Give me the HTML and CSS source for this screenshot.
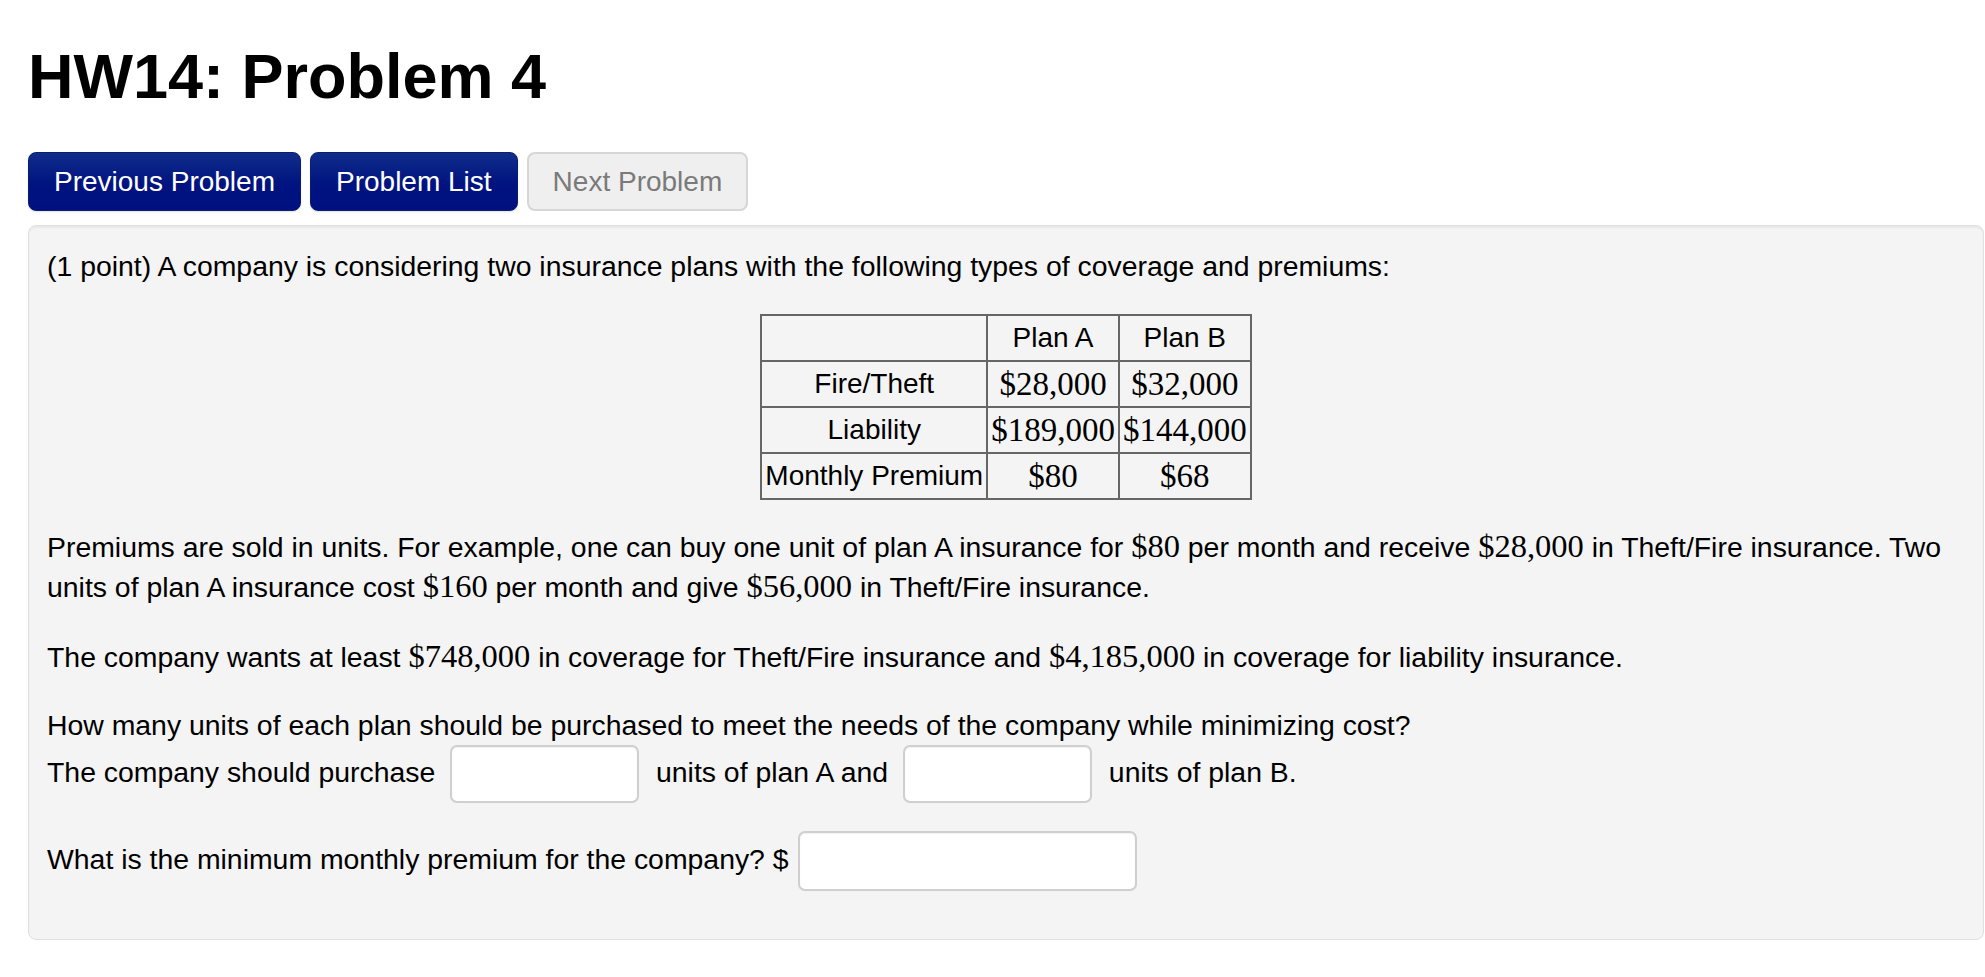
FILE: index.html
```html
<!DOCTYPE html>
<html lang="en">
<head>
<meta charset="utf-8">
<title>HW14: Problem 4</title>
<link rel="stylesheet" href="styles.css">
</head>
<body>
<div class="page">
  <h1 class="title">HW14: Problem 4</h1>
  <div class="nav">
    <a class="btn btn-primary">Previous Problem</a>
    <a class="btn btn-primary">Problem List</a>
    <a class="btn btn-disabled">Next Problem</a>
  </div>
  <div class="problem">
    <p class="para first">(1 point) A company is considering two insurance plans with the following types of coverage and premiums:</p>
    <table class="plans">
      <tr><td class="lbl"></td><td class="hd">Plan A</td><td class="hd">Plan B</td></tr>
      <tr><td class="lbl">Fire/Theft</td><td class="num">$28,000</td><td class="num">$32,000</td></tr>
      <tr><td class="lbl">Liability</td><td class="num">$189,000</td><td class="num">$144,000</td></tr>
      <tr><td class="lbl">Monthly Premium</td><td class="num">$80</td><td class="num">$68</td></tr>
    </table>
    <p class="para p2">Premiums are sold in units. For example, one can buy one unit of plan A insurance for <span class="m">$80</span> per month and receive <span class="m">$28,000</span> in Theft/Fire insurance. Two units of plan A insurance cost <span class="m">$160</span> per month and give <span class="m">$56,000</span> in Theft/Fire insurance.</p>
    <p class="para">The company wants at least <span class="m">$748,000</span> in coverage for Theft/Fire insurance and <span class="m">$4,185,000</span> in coverage for liability insurance.</p>
    <p class="para">How many units of each plan should be purchased to meet the needs of the company while minimizing cost?<br>The company should purchase <input class="ans" type="text"> units of plan A and <input class="ans" type="text"> units of plan B.</p>
    <p class="para last">What is the minimum monthly premium for the company? $<input class="ans wide" type="text"></p>
  </div>
</div>
</body>
</html>
```

FILE: styles.css
```css
html, body {
  margin: 0;
  padding: 0;
  background: #ffffff;
}

body {
  font-family: "Liberation Sans", Arial, Helvetica, sans-serif;
  color: #000;
  font-size: 28.4px;
  line-height: 40px;
}

.page {
  padding: 0 1px 0 28px;
}

.title {
  margin: 0;
  padding-top: 42px;
  font-size: 63px;
  line-height: 69px;
  font-weight: bold;
  color: #000;
}

.nav {
  display: flex;
  gap: 9px;
  margin-top: 41px;
}

.btn {
  display: inline-block;
  padding: 8px 25px;
  border: 1px solid transparent;
  border-radius: 8px;
  font-size: 28px;
  line-height: 41px;
  text-decoration: none;
  cursor: pointer;
}

.btn-primary {
  color: #fff;
  background: linear-gradient(#102d8a, #001380 55%, #001080);
  border-color: #0a1f6e;
  box-shadow: 0 1px 2px rgba(0, 0, 0, 0.12);
}

.btn-disabled {
  color: #7a7a7a;
  background: #efefef;
  border: 2px solid #d6d6d6;
  padding: 7px 24px;
}

.problem {
  margin-top: 14px;
  background: #f4f4f4;
  border: 1px solid #e0e0e0;
  border-radius: 8px;
  box-shadow: inset 0 2px 2px rgba(0, 0, 0, 0.05);
  padding: 20px 18px 48px 18px;
}

.para {
  margin: 0 0 28px 0;
}

.para.p2 {
  margin-bottom: 30px;
}

.para.last {
  margin-bottom: 0;
}

.m {
  font-family: "Liberation Serif", "Times New Roman", serif;
  font-size: 32.5px;
  line-height: 28px;
}

.plans {
  border-collapse: collapse;
  margin: 0 auto 27px auto;
}

.plans td {
  border: 2px solid #666;
  padding: 1px 3px;
  height: 42px;
  text-align: center;
  vertical-align: middle;
}

.plans td.lbl,
.plans td.hd {
  font-size: 28px;
  line-height: 40px;
}

.plans td.num {
  font-family: "Liberation Serif", "Times New Roman", serif;
  font-size: 33px;
  line-height: 40px;
}

.ans {
  display: inline-block;
  box-sizing: border-box;
  width: 189px;
  height: 58px;
  margin: 0 9px 0 7px;
  vertical-align: middle;
  background: #fff;
  border: 2px solid #cfcfcf;
  border-radius: 7px;
  box-shadow: inset 0 1px 2px rgba(0, 0, 0, 0.06);
  font-size: 28px;
  font-family: "Liberation Sans", Arial, sans-serif;
}

.ans.wide {
  width: 339px;
  height: 60px;
  margin-left: 9px;
}
```
